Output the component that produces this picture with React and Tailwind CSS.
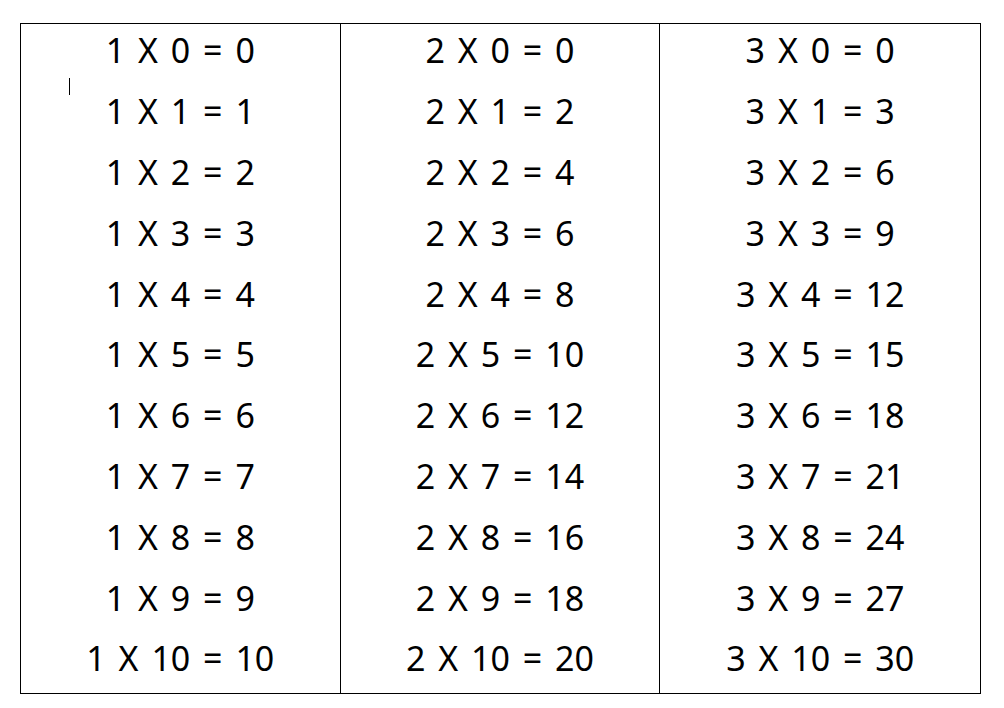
const cols = [1, 2, 3];
const rows = [0, 1, 2, 3, 4, 5, 6, 7, 8, 9, 10];

export default function App() {
  return (
    <div className="w-[1004px] h-[708px] bg-white relative pt-[23px] pl-[20px]">
      <div className="w-[961px] h-[671px] grid grid-cols-3 border border-black">
        {cols.map((c, i) => (
          <div
            key={c}
            className={`flex flex-col ${i < 2 ? "border-r border-black" : ""}`}
          >
            {rows.map((r) => (
              <div
                key={r}
                className="h-[60.8px] flex items-center justify-center pb-[8px] text-[34px] leading-none text-black [word-spacing:4px] font-['Noto_Sans',sans-serif]"
              >
                {c} X {r} = {c * r}
              </div>
            ))}
          </div>
        ))}
      </div>
      {/* text cursor */}
      <div className="absolute left-[69px] top-[78px] w-px h-[17px] bg-black" />
    </div>
  );
}
